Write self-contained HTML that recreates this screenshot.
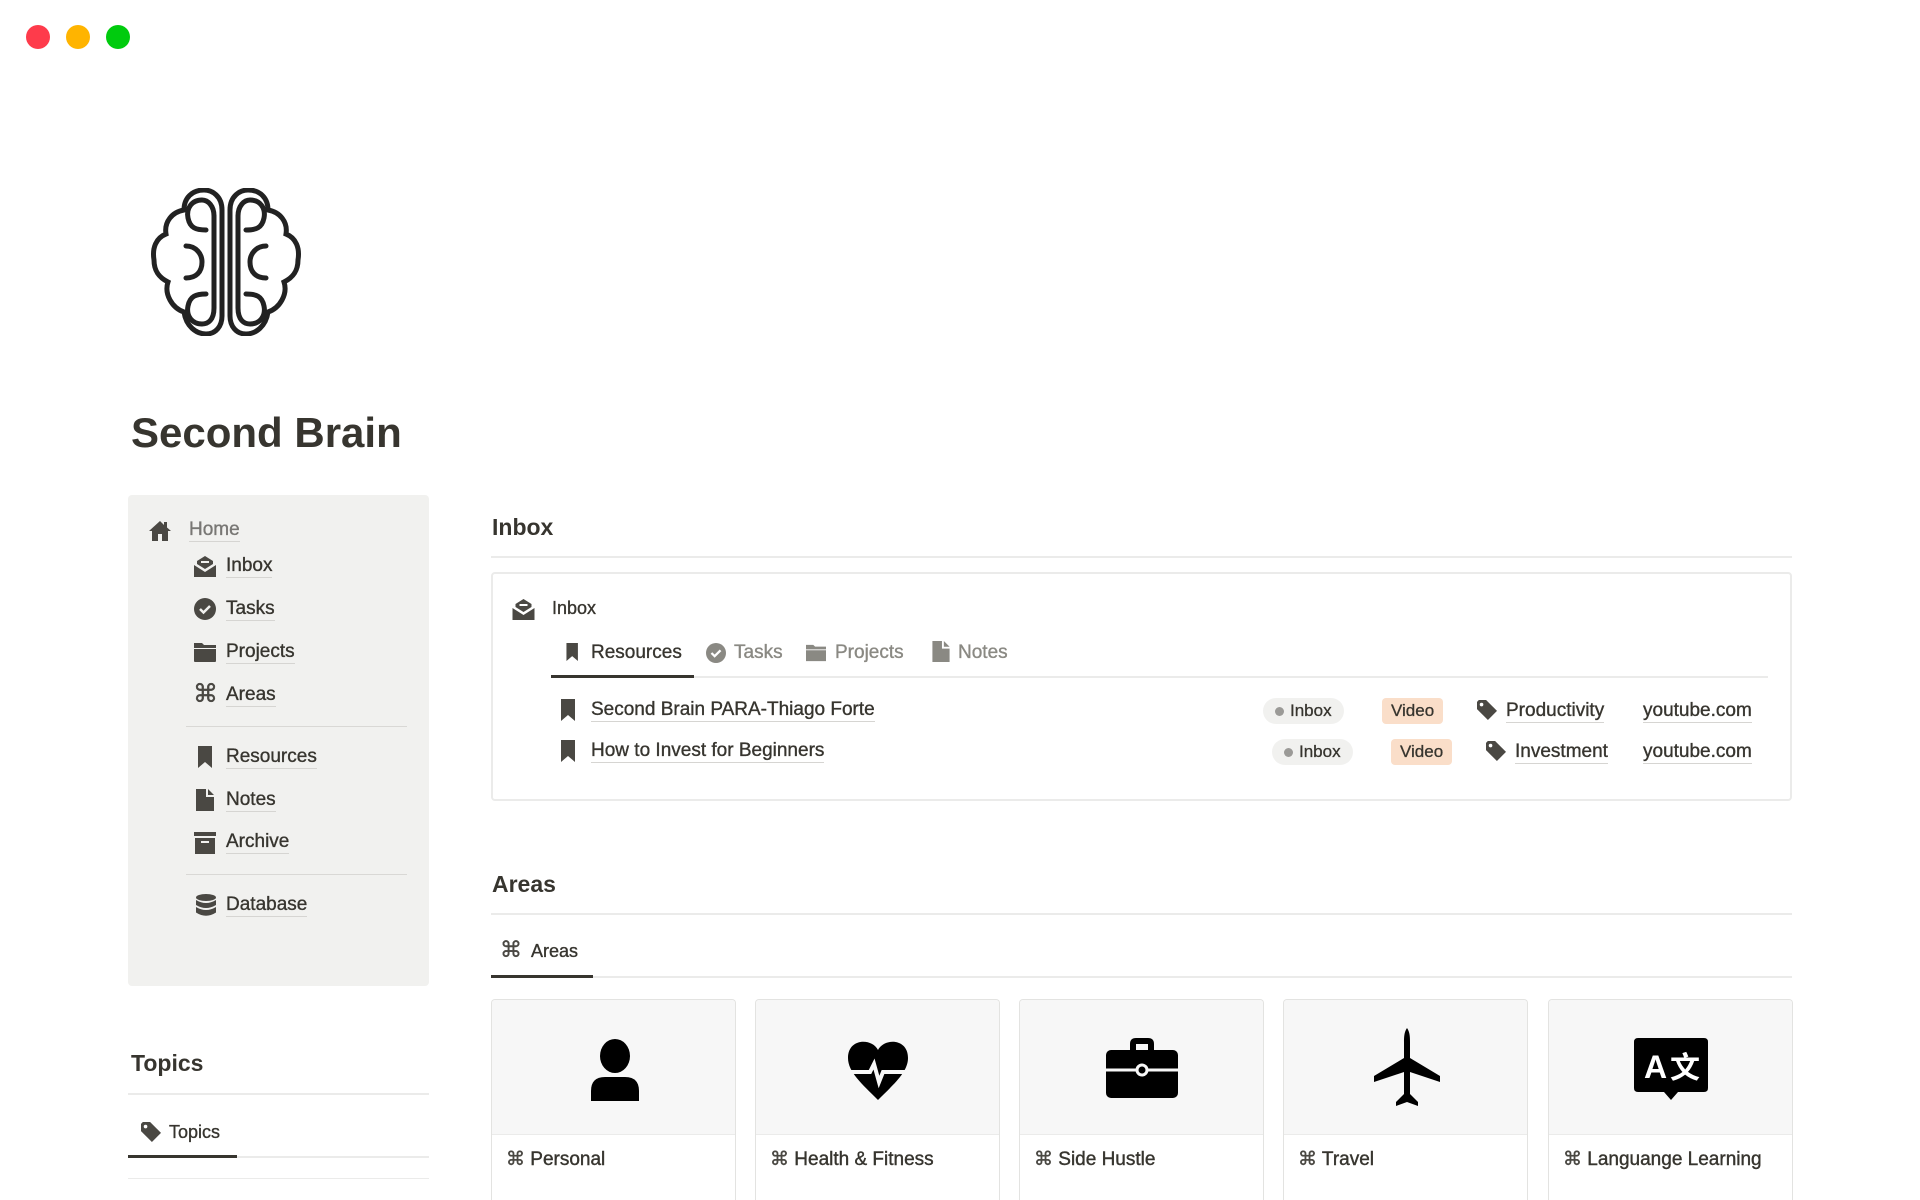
<!DOCTYPE html>
<html style="width:1920px;height:1200px;overflow:hidden"><head><meta charset="utf-8"><style>
*{box-sizing:border-box;margin:0;padding:0}
body{width:1920px;height:1200px;overflow:hidden;background:#fff;font-family:"Liberation Sans",sans-serif;color:#37352f;position:relative}
.a{position:absolute}
.dot{width:24px;height:24px;border-radius:50%;top:25px}
.u{border-bottom:1px solid #d6d5d2;padding-bottom:1px}
.si{position:absolute;font-size:19px;color:#37352f;-webkit-text-stroke:0.35px currentColor}
.ic{position:absolute;width:22px;height:22px;fill:#4a4843}
.ln{position:absolute;height:2px;background:#ebebea}
.pill{position:absolute;height:26px;border-radius:4px;font-size:17px;line-height:26px;padding:0 9px;-webkit-text-stroke:0.3px currentColor}
.card{position:absolute;top:999px;width:245px;height:201px;border:1px solid #e3e3e1;border-bottom:none;border-radius:4px 4px 0 0;overflow:hidden}
.cov{height:135px;background:#f7f7f7;border-bottom:1px solid #ebebea;position:relative}
.cl{position:absolute;top:148px;left:14px;font-size:19px;-webkit-text-stroke:0.4px currentColor}
.cl span{color:#4a4843}
</style></head><body>
<div class="a dot" style="left:26px;background:#fe3b4b"></div>
<div class="a dot" style="left:66px;background:#ffb400"></div>
<div class="a dot" style="left:106px;background:#00cb0e"></div>

<svg class="a" style="left:150px;top:188px" width="152" height="148" viewBox="0 0 152 148" fill="none" stroke="#222" stroke-width="5" stroke-linecap="round">
<path d="M72 22 C72 8 62 2 54 2 C42 2 34 10 34 22 C22 24 14 34 16 46 C6 50 2 60 4 72 C4 84 10 90 18 94 C14 106 22 120 34 124 C36 138 46 146 56 146 C66 146 72 138 72 128 Z"/>
<path d="M80 22 C80 8 90 2 98 2 C110 2 118 10 118 22 C130 24 138 34 136 46 C146 50 150 60 148 72 C148 84 142 90 134 94 C138 106 130 120 118 124 C116 138 106 146 96 146 C86 146 80 138 80 128 Z"/>
<path d="M64 28 V120 C64 132 58 136 52 136 C42 136 36 128 38 118 C40 108 46 106 56 106"/>
<path d="M64 28 C64 18 58 12 52 12 C42 12 36 20 38 30 C40 40 46 42 56 42"/>
<path d="M88 28 V120 C88 132 94 136 100 136 C110 136 116 128 114 118 C112 108 106 106 96 106"/>
<path d="M88 28 C88 18 94 12 100 12 C110 12 116 20 114 30 C112 40 106 42 96 42"/>
<path d="M36 58 C46 58 52 66 52 74 C52 84 46 90 36 90"/>
<path d="M116 58 C106 58 100 66 100 74 C100 84 106 90 116 90"/>
</svg>

<div class="a" style="left:131px;top:409px;font-size:42px;font-weight:bold;color:#37352f">Second Brain</div>

<div class="a" style="left:128px;top:495px;width:301px;height:491px;background:#f1f1ef;border-radius:4px"></div>
<svg class="ic" style="left:148px;top:520px;width:24px;height:22px" viewBox="0 0 24 22"><path d="M12 1 L1 11 H4 V21 H10 V14 H14 V21 H20 V11 H23 L19 7.5 V2 H16 V5 Z"/></svg>
<div class="si" style="left:189px;top:519px;color:#787774"><span class="u">Home</span></div>
<svg class="ic" style="left:194px;top:556px" viewBox="0 0 22 22"><path d="M11 0 L3 5 V8 L11 13 L19 8 V5 Z M0 9 V21 H22 V9 L11 16 Z" /><path d="M7 6 H15" stroke="#f1f1ef" stroke-width="2"/></svg>
<div class="si" style="left:226px;top:555px"><span class="u">Inbox</span></div>
<svg class="ic" style="left:194px;top:598px" viewBox="0 0 22 22"><circle cx="11" cy="11" r="11"/><path d="M6 11 L9.5 14.5 L16 8" stroke="#f1f1ef" stroke-width="2.5" fill="none"/></svg>
<div class="si" style="left:226px;top:598px"><span class="u">Tasks</span></div>
<svg class="ic" style="left:194px;top:641px" viewBox="0 0 22 22"><path d="M0 2 H8 L10 4 H22 V7 H0 Z M0 8 H22 V20 Q22 21 21 21 H1 Q0 21 0 20 Z"/></svg>
<div class="si" style="left:226px;top:641px"><span class="u">Projects</span></div>
<div class="si" style="left:193px;top:679px;font-size:25px;color:#4a4843">⌘</div>
<div class="si" style="left:226px;top:684px"><span class="u">Areas</span></div>
<div class="a" style="left:186px;top:726px;width:221px;height:1px;background:#d9d8d5"></div>
<svg class="ic" style="left:196px;top:746px" viewBox="0 0 22 22"><path d="M2 0 H16 V22 L9 16 L2 22 Z"/></svg>
<div class="si" style="left:226px;top:746px"><span class="u">Resources</span></div>
<svg class="ic" style="left:196px;top:789px" viewBox="0 0 22 22"><path d="M0 0 H10 V8 H18 V22 H0 Z M12 0 L18 6 H12 Z"/></svg>
<div class="si" style="left:226px;top:789px"><span class="u">Notes</span></div>
<svg class="ic" style="left:194px;top:832px" viewBox="0 0 22 22"><path d="M0 0 H22 V4 H0 Z M1 6 H21 V22 H1 Z"/><path d="M7 10 H15" stroke="#f1f1ef" stroke-width="2"/></svg>
<div class="si" style="left:226px;top:831px"><span class="u">Archive</span></div>
<div class="a" style="left:186px;top:874px;width:221px;height:1px;background:#d9d8d5"></div>
<svg class="ic" style="left:195px;top:894px" viewBox="0 0 22 22"><ellipse cx="11" cy="3.5" rx="10" ry="3.5"/><path d="M1 6 Q11 12 21 6 V11 Q11 17 1 11 Z M1 13 Q11 19 21 13 V18.5 Q11 25 1 18.5 Z"/></svg>
<div class="si" style="left:226px;top:894px"><span class="u">Database</span></div>

<div class="a" style="left:131px;top:1050px;font-size:23px;font-weight:bold">Topics</div>
<div class="ln" style="left:128px;top:1093px;width:301px"></div>
<svg class="ic" style="left:141px;top:1122px;width:20px;height:20px" viewBox="0 0 22 22"><path d="M0 2 V10 L12 22 L22 12 L10 0 H2 Z"/><circle cx="5" cy="5" r="2" fill="#fff"/></svg>
<div class="si" style="left:169px;top:1122px;font-size:18px">Topics</div>
<div class="ln" style="left:128px;top:1156px;width:301px"></div>
<div class="a" style="left:128px;top:1155px;width:109px;height:3px;background:#37352f"></div>
<div class="ln" style="left:128px;top:1178px;width:301px;height:1px"></div>

<div class="a" style="left:492px;top:514px;font-size:23px;font-weight:bold">Inbox</div>
<div class="ln" style="left:491px;top:556px;width:1301px"></div>
<div class="a" style="left:491px;top:572px;width:1301px;height:229px;border:2px solid #ebebea;border-radius:4px"></div>
<svg class="ic" style="left:512px;top:599px;width:23px" viewBox="0 0 22 22"><path d="M11 0 L3 5 V8 L11 13 L19 8 V5 Z M0 9 V21 H22 V9 L11 16 Z"/><path d="M7 6 H15" stroke="#fff" stroke-width="2"/></svg>
<div class="si" style="left:552px;top:598px;font-size:18px">Inbox</div>
<svg class="ic" style="left:564px;top:642px;width:18px;height:20px" viewBox="0 0 22 22"><path d="M3 0 H17 V22 L10 16 L3 22 Z"/></svg>
<div class="si" style="left:591px;top:642px;font-size:19px">Resources</div>
<svg class="ic" style="left:706px;top:643px;width:20px;height:20px;fill:#8a8983" viewBox="0 0 22 22"><circle cx="11" cy="11" r="11"/><path d="M6 11 L9.5 14.5 L16 8" stroke="#fff" stroke-width="2.5" fill="none"/></svg>
<div class="si" style="left:734px;top:642px;color:#8a8983">Tasks</div>
<svg class="ic" style="left:806px;top:643px;width:20px;height:20px;fill:#8a8983" viewBox="0 0 22 22"><path d="M0 2 H8 L10 4 H22 V7 H0 Z M0 8 H22 V20 H0 Z"/></svg>
<div class="si" style="left:835px;top:642px;color:#8a8983">Projects</div>
<svg class="ic" style="left:932px;top:641px;width:18px;height:21px;fill:#8a8983" viewBox="0 0 18 22"><path d="M0 0 H10 V8 H18 V22 H0 Z M12 0 L18 6 H12 Z"/></svg>
<div class="si" style="left:958px;top:642px;color:#8a8983">Notes</div>
<div class="ln" style="left:551px;top:676px;width:1217px"></div>
<div class="a" style="left:551px;top:675px;width:143px;height:3px;background:#37352f"></div>

<svg class="ic" style="left:560px;top:699px;width:16px;height:22px" viewBox="0 0 16 22"><path d="M1 0 H15 V22 L8 16 L1 22 Z"/></svg>
<div class="si" style="left:591px;top:699px"><span class="u">Second Brain PARA-Thiago Forte</span></div>
<div class="pill" style="left:1263px;top:698px;background:#f1f1ef;border-radius:13px;padding:0 12px"><span style="display:inline-block;width:9px;height:9px;border-radius:50%;background:#9b9a97;margin-right:6px"></span>Inbox</div>
<div class="pill" style="left:1382px;top:698px;background:#fadec9">Video</div>
<svg class="ic" style="left:1477px;top:700px;width:20px;height:20px" viewBox="0 0 22 22"><path d="M0 2 V10 L12 22 L22 12 L10 0 H2 Z"/><circle cx="5" cy="5" r="2" fill="#fff"/></svg>
<div class="si" style="left:1506px;top:700px"><span class="u">Productivity</span></div>
<div class="si" style="left:1643px;top:700px"><span class="u">youtube.com</span></div>

<svg class="ic" style="left:560px;top:740px;width:16px;height:22px" viewBox="0 0 16 22"><path d="M1 0 H15 V22 L8 16 L1 22 Z"/></svg>
<div class="si" style="left:591px;top:740px"><span class="u">How to Invest for Beginners</span></div>
<div class="pill" style="left:1272px;top:739px;background:#f1f1ef;border-radius:13px;padding:0 12px"><span style="display:inline-block;width:9px;height:9px;border-radius:50%;background:#9b9a97;margin-right:6px"></span>Inbox</div>
<div class="pill" style="left:1391px;top:739px;background:#fadec9">Video</div>
<svg class="ic" style="left:1486px;top:741px;width:20px;height:20px" viewBox="0 0 22 22"><path d="M0 2 V10 L12 22 L22 12 L10 0 H2 Z"/><circle cx="5" cy="5" r="2" fill="#fff"/></svg>
<div class="si" style="left:1515px;top:741px"><span class="u">Investment</span></div>
<div class="si" style="left:1643px;top:741px"><span class="u">youtube.com</span></div>

<div class="a" style="left:492px;top:871px;font-size:23px;font-weight:bold">Areas</div>
<div class="ln" style="left:491px;top:913px;width:1301px"></div>
<div class="si" style="left:500px;top:937px;font-size:22px;color:#4a4843">⌘</div>
<div class="si" style="left:531px;top:941px;font-size:18px">Areas</div>
<div class="ln" style="left:491px;top:976px;width:1301px"></div>
<div class="a" style="left:491px;top:975px;width:102px;height:3px;background:#37352f"></div>

<div class="card" style="left:491px"><div class="cov"><svg class="a" style="left:93px;top:39px" width="60" height="62" viewBox="0 0 60 62"><ellipse cx="30" cy="17" rx="15" ry="17"/><path d="M6 62 V52 Q6 38 20 38 H40 Q54 38 54 52 V62 Z"/></svg></div><div class="cl"><span>⌘</span> Personal</div></div>
<div class="card" style="left:755px"><div class="cov"><svg class="a" style="left:90px;top:38px" width="64" height="64" viewBox="0 0 64 64"><path d="M32 12 C26 0 2 0 2 20 C2 34 16 46 32 62 C48 46 62 34 62 20 C62 0 38 0 32 12 Z"/><path d="M2 34 H24 L28 26 L33 44 L37 34 H62" stroke="#f7f7f7" stroke-width="4" fill="none"/></svg></div><div class="cl"><span>⌘</span> Health &amp; Fitness</div></div>
<div class="card" style="left:1019px"><div class="cov"><svg class="a" style="left:86px;top:38px" width="72" height="60" viewBox="0 0 72 60"><path d="M24 12 V6 Q24 0 30 0 H42 Q48 0 48 6 V12 H42 V6 H30 V12 Z"/><rect x="0" y="12" width="72" height="48" rx="5"/><path d="M0 32 H72" stroke="#f7f7f7" stroke-width="3"/><circle cx="36" cy="32" r="5" fill="#000" stroke="#f7f7f7" stroke-width="3"/></svg></div><div class="cl"><span>⌘</span> Side Hustle</div></div>
<div class="card" style="left:1283px"><div class="cov"><svg class="a" style="left:88px;top:28px" width="70" height="80" viewBox="0 0 70 80"><path d="M35 0 C32 4 32 10 32 14 V30 L2 48 V54 L32 44 V66 L24 74 V78 L35 74 L46 78 V74 L38 66 V44 L68 54 V48 L38 30 V14 C38 10 38 4 35 0 Z"/></svg></div><div class="cl"><span>⌘</span> Travel</div></div>
<div class="card" style="left:1548px"><div class="cov"><svg class="a" style="left:85px;top:38px" width="74" height="64" viewBox="0 0 74 64"><path d="M4 0 H70 Q74 0 74 4 V50 Q74 54 70 54 H44 L37 62 L30 54 H4 Q0 54 0 50 V4 Q0 0 4 0 Z"/><text x="10" y="40" font-family="Liberation Sans" font-weight="bold" font-size="32" fill="#fff">A</text><text x="36" y="40" font-family="Noto Sans CJK SC" font-weight="bold" font-size="30" fill="#fff">文</text></svg></div><div class="cl"><span>⌘</span> Languange Learning</div></div>
</body></html>
